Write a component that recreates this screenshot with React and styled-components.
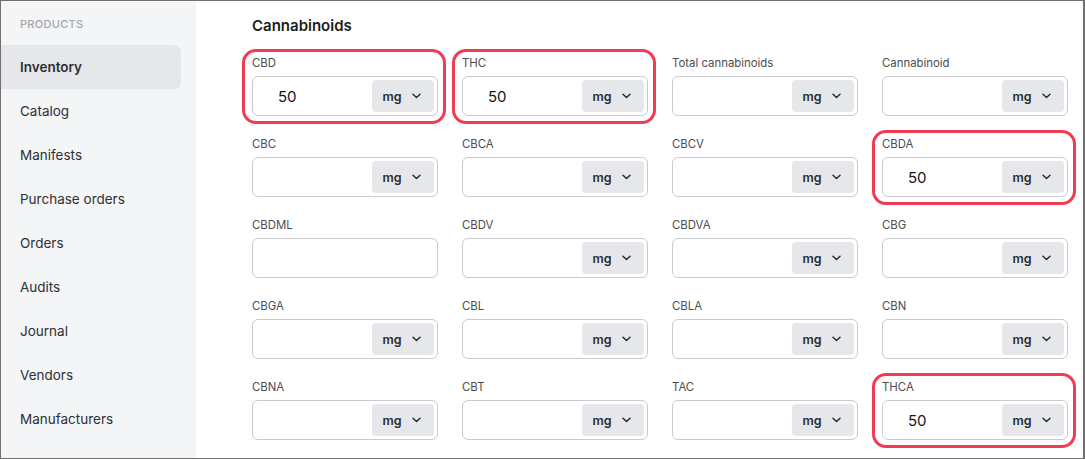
import React from "react";
import styled, { createGlobalStyle } from "styled-components";

const Global = createGlobalStyle`
  html, body { margin: 0; padding: 0; background: #ffffff; }
  body { font-family: Inter, "Noto Sans", "Liberation Sans", sans-serif; -webkit-font-smoothing: antialiased; }
  * { box-sizing: border-box; }
`;

const Frame = styled.div`
  width: 1085px;
  height: 459px;
  border: 1px solid #707070;
  border-right-width: 2px;
  display: flex;
  overflow: hidden;
  background: #fff;
`;

const Sidebar = styled.nav`
  width: 195px;
  flex: none;
  background: #f4f5f7;
  padding-top: 16px;
  display: flex;
  flex-direction: column;
`;

const SectionLabel = styled.div`
  font-size: 11px;
  line-height: 14px;
  font-weight: 500;
  letter-spacing: 0.3px;
  color: #a3a6ab;
  text-transform: uppercase;
  padding-left: 19px;
  margin-bottom: 14px;
`;

const NavItem = styled.div`
  height: 44px;
  flex: none;
  display: flex;
  align-items: center;
  padding-left: 19px;
  margin-right: 15px;
  border-radius: 0 7px 7px 0;
  font-size: 13.5px;
  color: #2e3034;
  font-weight: ${(p) => (p.$active ? 600 : 400)};
  background: ${(p) => (p.$active ? "#e5e7ea" : "transparent")};
`;

const Main = styled.main`
  flex: 1;
  padding: 15px 0 0 56px;
`;

const Title = styled.h2`
  margin: 0 0 20px;
  font-size: 15px;
  line-height: 20px;
  font-weight: 600;
  color: #1c1d20;
`;

const Grid = styled.div`
  display: grid;
  grid-template-columns: repeat(4, 186px);
  column-gap: 24px;
  row-gap: 21px;
`;

const Field = styled.div`
  position: relative;
  display: flex;
  flex-direction: column;
  gap: 6px;
`;

const Highlight = styled.div`
  position: absolute;
  top: -7px;
  left: -10px;
  right: -8px;
  bottom: -8px;
  border: 3px solid #f23b52;
  border-radius: 14px;
  pointer-events: none;
`;

const Label = styled.label`
  font-size: 11.4px;
  line-height: 14px;
  color: #4a4d52;
`;

const InputBox = styled.div`
  height: 40px;
  border: 1px solid #c9cbce;
  border-radius: 6px;
  display: flex;
  align-items: center;
  padding: 0 3px 0 25px;
`;

const Value = styled.span`
  flex: 1;
  font-size: 15px;
  color: #141518;
`;

const UnitSelect = styled.div`
  width: 62px;
  height: 32px;
  background: #e5e7ea;
  border-radius: 4px;
  display: flex;
  align-items: center;
  justify-content: center;
  gap: 10px;
  padding-right: 3px;
  font-size: 12.5px;
  font-weight: 600;
  color: #2b2d31;
`;

const Chevron = () => (
  <svg width="9" height="6" viewBox="0 0 9 6" fill="none">
    <path d="M1 1.2l3.5 3.3L8 1.2" stroke="#2b2d31" strokeWidth="1.5" strokeLinecap="round" strokeLinejoin="round" />
  </svg>
);

const nav = [
  "Inventory",
  "Catalog",
  "Manifests",
  "Purchase orders",
  "Orders",
  "Audits",
  "Journal",
  "Vendors",
  "Manufacturers",
  "Brands",
];

const fields = [
  { label: "CBD", value: "50", hl: true },
  { label: "THC", value: "50", hl: true },
  { label: "Total cannabinoids" },
  { label: "Cannabinoid" },
  { label: "CBC" },
  { label: "CBCA" },
  { label: "CBCV" },
  { label: "CBDA", value: "50", hl: true },
  { label: "CBDML", noUnit: true },
  { label: "CBDV" },
  { label: "CBDVA" },
  { label: "CBG" },
  { label: "CBGA" },
  { label: "CBL" },
  { label: "CBLA" },
  { label: "CBN" },
  { label: "CBNA" },
  { label: "CBT" },
  { label: "TAC" },
  { label: "THCA", value: "50", hl: true },
];

export default function App() {
  return (
    <>
      <Global />
      <Frame>
        <Sidebar>
          <SectionLabel>Products</SectionLabel>
          {nav.map((n) => (
            <NavItem key={n} $active={n === "Inventory"}>
              {n}
            </NavItem>
          ))}
        </Sidebar>
        <Main>
          <Title>Cannabinoids</Title>
          <Grid>
            {fields.map((f) => (
              <Field key={f.label}>
                <Label>{f.label}</Label>
                <InputBox>
                  <Value>{f.value || ""}</Value>
                  {!f.noUnit && (
                    <UnitSelect>
                      <span>mg</span>
                      <Chevron />
                    </UnitSelect>
                  )}
                </InputBox>
                {f.hl && <Highlight />}
              </Field>
            ))}
          </Grid>
        </Main>
      </Frame>
    </>
  );
}
